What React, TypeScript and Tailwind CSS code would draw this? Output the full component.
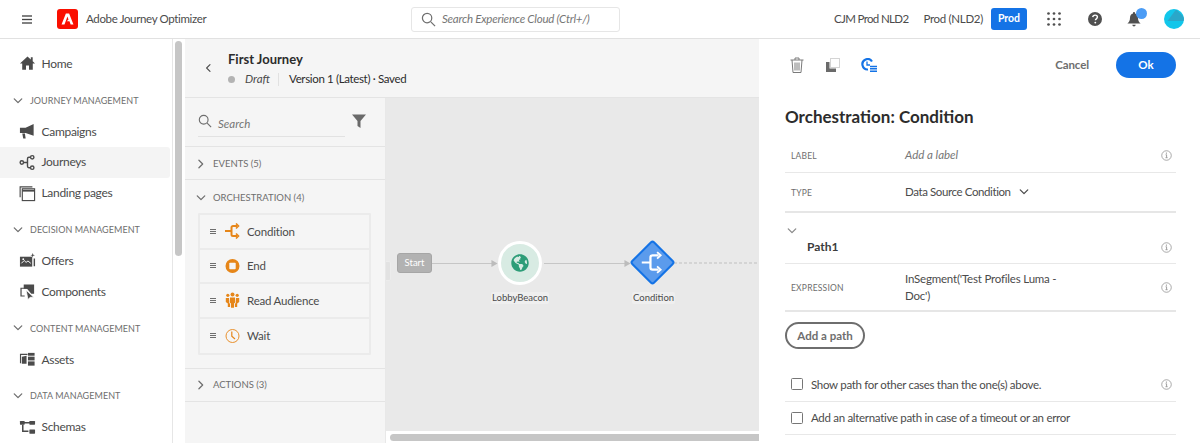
import React from "react";
import { FaGlobeAmericas } from "react-icons/fa";

const font = "font-['Lato','Noto_Sans',sans-serif]";

function Chevron({ dir = "down", className = "" }: { dir?: "down" | "right" | "left"; className?: string }) {
  const d = dir === "down" ? "M1.5 3.5 6 8l4.5-4.5" : dir === "right" ? "M3.5 1.5 8 6l-4.5 4.5" : "M8 1.5 3.5 6 8 10.5";
  return (
    <svg viewBox="0 0 12 12" className={className} fill="none" stroke="currentColor" strokeWidth="1.5" strokeLinecap="round" strokeLinejoin="round">
      <path d={d} />
    </svg>
  );
}

function Info() {
  return (
    <svg viewBox="0 0 12 12" className="w-[11px] h-[11px] text-[#8a8a8a] shrink-0" fill="none" stroke="currentColor">
      <circle cx="6" cy="6" r="5.2" strokeWidth="0.8" />
      <path d="M5 5.2h1.1v3M4.9 8.4h2.3" strokeWidth="0.9" />
      <circle cx="5.9" cy="3.4" r="0.7" fill="currentColor" stroke="none" />
    </svg>
  );
}

const navIcons: Record<string, React.ReactNode> = {
  Home: <path d="M9 1.500 1 9h2.400v6.500h4V11h3.200v4.500h4V9H17L14.500 6.600V2.500h-2v2.200z" fill="currentColor" />,
  Campaigns: (
    <g fill="currentColor">
      <path d="M15.500 1v12.500L7 10.500H1V5h6z" />
      <path d="M3.500 11h2.800l.7 5.500H4.500z" />
    </g>
  ),
  Journeys: (
    <g fill="none" stroke="currentColor" strokeWidth="1.500">
      <circle cx="3" cy="9" r="1.800" />
      <circle cx="14" cy="3.500" r="1.800" />
      <circle cx="14" cy="14.500" r="1.800" />
      <path d="M5 9h4M12 3.500h-1.500a1.500 1.500 0 0 0-1.500 1.500v8a1.500 1.500 0 0 0 1.500 1.500H12" />
    </g>
  ),
  "Landing pages": (
    <g fill="none" stroke="currentColor" strokeWidth="1.200">
      <rect x="3.500" y="4" width="13" height="12.500" />
      <path d="M3.500 6h13" strokeWidth="2" />
      <path d="M1.200 13V2h13" />
    </g>
  ),
  Offers: (
    <g>
      <rect x="1" y="5" width="13" height="10.500" fill="currentColor" />
      <path d="M2.500 12l3-3 2 2 2-1.500 3 2.500" fill="none" stroke="#fff" strokeWidth="1" />
      <circle cx="4.500" cy="7.600" r="1" fill="#fff" />
      <path d="M14.500 1l.6 1.800 1.800.6-1.800.6-.6 1.800-.6-1.800-1.800-.6 1.800-.6zM15.500 7h1.500v8h-1.500z" fill="currentColor" />
    </g>
  ),
  Components: (
    <g>
      <path d="M5 1.500h11v10H13L8.500 6H5z" fill="currentColor" />
      <path d="M1.500 5h8v1.200H2.800v7H6v1.200H1.500z" fill="currentColor" />
      <path d="M7.500 7.500l8 7.500-3.600.2L9.500 17.500z" fill="currentColor" stroke="#fff" strokeWidth="0.800" />
    </g>
  ),
  Assets: (
    <g fill="currentColor">
      <path d="M1 3h8v1.200H2.200V13H1z" />
      <path d="M3 6l5-1v8.500H3z" />
      <rect x="9.500" y="2" width="7" height="3" />
      <rect x="9.500" y="6" width="7" height="4" />
      <rect x="9.500" y="11" width="7" height="4.500" />
    </g>
  ),
  Schemas: (
    <g>
      <path d="M4 6v7h6M4 4h8" fill="none" stroke="currentColor" strokeWidth="1.600" />
      <rect x="1" y="2" width="5" height="4" rx="0.600" fill="currentColor" />
      <rect x="11" y="2" width="6" height="4" rx="0.600" fill="currentColor" />
      <rect x="11" y="11" width="6" height="4.500" rx="0.600" fill="currentColor" />
    </g>
  ),
};

function NavItem({ label, active }: { label: string; active?: boolean }) {
  return (
    <div className={`h-[30.7px] flex items-center pl-[19px] rounded-r-[3px] mr-[2px] ${active ? "bg-[#f4f4f4]" : ""}`}>
      <svg viewBox="0 0 18 18" className="w-[17px] h-[17px] text-[#4b4b4b] shrink-0">
        {navIcons[label]}
      </svg>
      <span className="ml-[5.500px] text-[12px] tracking-[-0.3px] text-[#4b4b4b]">{label}</span>
    </div>
  );
}

function NavSection({ label }: { label: string }) {
  return (
    <div className="h-[30.7px] mt-[6px] mb-[0.500px] flex items-center pl-[13px]">
      <Chevron className="w-[10px] h-[10px] text-[#6e6e6e]" />
      <span className="ml-[7px] text-[9px] tracking-[0.05px] text-[#6e6e6e] whitespace-nowrap">{label}</span>
    </div>
  );
}

function TopBar() {
  return (
    <header className="h-[39px] shrink-0 bg-white border-b border-[#e1e1e1] flex items-center text-[#4b4b4b] pr-[16px]">
      <svg viewBox="0 0 12 10" className="ml-[22px] w-[10px] h-[9px]" fill="#444">
        <rect width="12" height="1.600" />
        <rect y="4.200" width="12" height="1.600" />
        <rect y="8.400" width="12" height="1.600" />
      </svg>
      <div className="ml-[25px] w-[21px] h-[20px] rounded-[3px] bg-[#fa0f00] flex items-center justify-center">
        <svg viewBox="0 0 24 22" className="w-[13px] h-[12px]" fill="#fff">
          <path d="M9 1h6l8 20h-5.200l-2.200-5.800H10.500L14 12h-.2L12 6.500 6.400 21H1z" />
        </svg>
      </div>
      <span className="ml-[8px] w-[120px] text-[11.500px] tracking-[-0.35px] whitespace-nowrap">Adobe Journey Optimizer</span>
      <div className="ml-[205px] w-[209px] h-[25px] rounded-[3px] border border-[#e6e6e6] flex items-center pl-[9px]">
        <svg viewBox="0 0 16 16" className="w-[15px] h-[15px] text-[#6e6e6e]" fill="none" stroke="currentColor" strokeWidth="1.300">
          <circle cx="6.500" cy="6.500" r="5" />
          <path d="M10.500 10.500 15 15" />
        </svg>
        <span className="ml-[6px] text-[11.500px] tracking-[-0.23px] italic text-[#767676] whitespace-nowrap">Search Experience Cloud (Ctrl+/)</span>
      </div>
      <span className="ml-auto text-[11.500px] tracking-[-0.65px] whitespace-nowrap">CJM Prod NLD2</span>
      <span className="ml-[15px] text-[11.500px] tracking-[-0.3px] whitespace-nowrap">Prod (NLD2)</span>
      <span className="ml-[8px] w-[36px] h-[22px] rounded-[3px] bg-[#1473e6] text-white text-[10.500px] font-bold flex items-center justify-center">Prod</span>
      <svg viewBox="0 0 14 14" className="ml-[20px] w-[14px] h-[14px]" fill="#505050">
        {[1.5, 7, 12.5].flatMap((y) => [1.5, 7, 12.5].map((x) => <circle key={`${x}-${y}`} cx={x} cy={y} r="1.350" />))}
      </svg>
      <svg viewBox="0 0 14 14" className="ml-[27px] w-[14px] h-[14px]">
        <circle cx="7" cy="7" r="7" fill="#505050" />
        <path d="M4.700 5.200c.2-1.400 1.200-2.100 2.400-2.100 1.300 0 2.300.8 2.300 2 0 1.800-2 1.700-2 3.200" fill="none" stroke="#fff" strokeWidth="1.400" />
        <circle cx="7.300" cy="10.600" r="0.950" fill="#fff" />
      </svg>
      <div className="relative ml-[25px] w-[14px] h-[15px] mt-[1px]">
        <svg viewBox="0 0 14 15" className="w-[14px] h-[15px]" fill="#505050">
          <path d="M7 0c.7 0 1 .5 1 1v.6c2 .5 3 2.200 3 4.200 0 3 1 4.300 2.600 5.800H.4C2 10.100 3 8.800 3 5.800c0-2 1-3.700 3-4.200V1c0-.5.3-1 1-1zM5.300 12.800h3.400C8.500 13.800 7.900 14.500 7 14.500s-1.500-.7-1.700-1.700z" />
        </svg>
        <span className="absolute left-[8.500px] top-[-4px] w-[11px] h-[11px] rounded-full bg-[#4b9cf5]" />
      </div>
      <svg viewBox="0 0 20 20" className="ml-[23px] w-[20px] h-[20px]">
        <clipPath id="avatar-clip"><circle cx="10" cy="10" r="10" /></clipPath>
        <circle cx="10" cy="10" r="10" fill="#12c6ea" />
        <path d="M12 0.500 3.500 12H20V8z" fill="#2aa7c9" clipPath="url(#avatar-clip)" />
      </svg>
    </header>
  );
}

function Sidebar() {
  return (
    <aside className="w-[173px] shrink-0 border-r border-[#e6e6e6] pt-[9.500px] bg-white overflow-hidden">
      <NavItem label="Home" />
      <NavSection label="JOURNEY MANAGEMENT" />
      <NavItem label="Campaigns" />
      <NavItem label="Journeys" active />
      <NavItem label="Landing pages" />
      <NavSection label="DECISION MANAGEMENT" />
      <NavItem label="Offers" />
      <NavItem label="Components" />
      <NavSection label="CONTENT MANAGEMENT" />
      <NavItem label="Assets" />
      <NavSection label="DATA MANAGEMENT" />
      <NavItem label="Schemas" />
    </aside>
  );
}

function ScrollTrack() {
  return (
    <div className="w-[12px] shrink-0 bg-white pl-[2px] pt-[2px]">
      <div className="w-[7px] h-[215px] rounded-full bg-[#c6c6c6]" />
    </div>
  );
}

function Accordion({ label, open, tight }: { label: string; open?: boolean; tight?: boolean }) {
  return (
    <div className={`flex items-center pl-[11px] text-[#6e6e6e] h-[33px] ${open ? "pt-[3px]" : "border-b border-[#e4e4e4]"} ${!open && !tight ? "pt-[2px]" : ""}`}>
      <Chevron dir={open ? "down" : "right"} className="w-[10px] h-[10px]" />
      <span className="ml-[7px] text-[9.500px] whitespace-nowrap">{label}</span>
    </div>
  );
}

const activityIcons: Record<string, React.ReactNode> = {
  Condition: (
    <g fill="none" stroke="#e68619" strokeWidth="2">
      <path d="M0 8h6.500M12 3H8a1.500 1.500 0 0 0-1.500 1.500v7A1.500 1.500 0 0 0 8 13h4" />
      <path d="M11 .5 13.500 3 11 5.500M11 10.500 13.500 13 11 15.500" strokeWidth="1.600" />
    </g>
  ),
  End: (
    <g>
      <circle cx="7.500" cy="8" r="6.300" fill="#e68619" stroke="#e68619" strokeWidth="1.400" />
      <rect x="4.300" y="4.800" width="6.400" height="6.400" rx="0.800" fill="#f5f5f5" />
    </g>
  ),
  "Read Audience": (
    <g fill="#e68619">
      <circle cx="7.500" cy="2.600" r="2" />
      <circle cx="2.800" cy="3.300" r="1.600" />
      <circle cx="12.200" cy="3.300" r="1.600" />
      <path d="M5 5.500h5l.3 5-1.300 1v4.300H6v-4.300l-1.300-1z" />
      <path d="M.8 6H4l.1 5 1 .8V15H2.800v-3.500L.8 10zM14.200 6H11l-.1 5-1 .8V15h2.300v-3.500l2-1.500z" />
    </g>
  ),
  Wait: (
    <g fill="none" stroke="#e68619" strokeWidth="0.900">
      <circle cx="7.500" cy="8" r="6.500" />
      <path d="M6.800 3.500V8.300L10 11" strokeWidth="1.200" />
    </g>
  ),
};

function Activity({ label, last }: { label: string; last?: boolean }) {
  return (
    <div className={`h-[34.500px] flex items-center ${last ? "" : "border-b-2 border-[#ebebeb]"}`}>
      <svg viewBox="0 0 6 5" className="ml-[10px] w-[6px] h-[5px]" fill="#6e6e6e">
        <rect width="6" height="1" />
        <rect y="2" width="6" height="1" />
        <rect y="4" width="6" height="1" />
      </svg>
      <svg viewBox="0 0 15 16" className="ml-[9px] w-[15px] h-[16px]">
        {activityIcons[label]}
      </svg>
      <span className="ml-[7px] text-[11.500px] tracking-[-0.2px] text-[#4b4b4b] whitespace-nowrap">{label}</span>
    </div>
  );
}

function Palette() {
  return (
    <div className="w-[201px] shrink-0 bg-[#f5f5f5] border-r border-[#e8e8e8] flex flex-col">
      <div className="h-[49px] border-b border-[#e4e4e4] shrink-0 px-[13px]">
        <div className="flex items-center justify-between pt-[15px]">
          <div className="w-[147px] h-[24px] border-b border-[#e2e2e2] flex items-start">
            <svg viewBox="0 0 16 16" className="w-[14px] h-[14px] text-[#6e6e6e] mt-[1px]" fill="none" stroke="currentColor" strokeWidth="1.300">
              <circle cx="6.500" cy="6.500" r="5" />
              <path d="M10.500 10.500 15 15" />
            </svg>
            <span className="ml-[6px] mt-[2px] text-[11.500px] italic text-[#767676]">Search</span>
          </div>
          <svg viewBox="0 0 14 14" className="w-[14px] h-[14px] mr-[6px] mb-[8px]" fill="#6a6a6a">
            <path d="M0 .5h14L8.500 7v7l-3-2V7z" />
          </svg>
        </div>
      </div>
      <Accordion label="EVENTS (5)" />
      <Accordion label="ORCHESTRATION (4)" open />
      <div className="mx-[13px] w-[173px] border-2 border-[#ebebeb] rounded-[1px] shrink-0">
        <Activity label="Condition" />
        <Activity label="End" />
        <Activity label="Read Audience" />
        <Activity label="Wait" last />
      </div>
      <div className="mt-[13px] border-t border-[#e4e4e4]" />
      <Accordion label="ACTIONS (3)" tight />
    </div>
  );
}

function JourneyCanvas() {
  return (
    <div className="flex-1 flex flex-col min-w-0">
      <div className="relative flex-1 bg-[#e9e9e9] overflow-hidden">
        {/* splitter */}
        <div className="absolute left-[-3px] top-[163px] w-[8px] h-[20px] rounded-[2px] bg-[#e2e2e2] border border-[#ececec]" />
        {/* connectors */}
        <div className="absolute left-[46px] top-[164.500px] w-[62px] h-[1.500px] bg-[#c6c6c6]" />
        <svg viewBox="0 0 7 8" className="absolute left-[105px] top-[161.500px] w-[7px] h-[7px]" fill="#bcbcbc"><path d="M0 0l7 4-7 4z" /></svg>
        <div className="absolute left-[158px] top-[164.500px] w-[85px] h-[1.500px] bg-[#c6c6c6]" />
        <svg viewBox="0 0 7 8" className="absolute left-[238px] top-[161.500px] w-[7px] h-[7px]" fill="#bcbcbc"><path d="M0 0l7 4-7 4z" /></svg>
        <svg className="absolute left-[288px] top-[164px] w-[90px] h-[2px]">
          <line x1="0" y1="1" x2="90" y2="1" stroke="#cdcdcd" strokeWidth="1.500" strokeDasharray="3 2" />
        </svg>
        {/* Start */}
        <div className="absolute left-[11px] top-[155px] w-[35px] h-[20px] rounded-[3px] bg-[#b2b2b2] border border-[#a6a6a6] text-white text-[9.500px] flex items-center justify-center">Start</div>
        {/* LobbyBeacon */}
        <div className="absolute left-[112px] top-[143px] w-[44px] h-[44px] rounded-full bg-[#d8ebe3] border-[3px] border-white flex items-center justify-center">
          <FaGlobeAmericas className="w-[18px] h-[18px] text-[#2d9d78]" />
        </div>
        <span className="absolute left-[105px] top-[194px] px-[1px] rounded-[2px] bg-[#efefef] text-[9.500px] leading-[12px] text-[#4b4b4b]">LobbyBeacon</span>
        {/* Condition */}
        <svg viewBox="0 0 46 46" className="absolute left-[243px] top-[141px] w-[47px] h-[47px]">
          <rect x="8" y="8" width="30" height="30" rx="2" transform="rotate(45 23 23)" fill="#5b9bec" stroke="#1473e6" strokeWidth="2" />
          <path d="M12.500 23H20M29 16h-6a2 2 0 0 0-2 2v10a2 2 0 0 0 2 2h6" fill="none" stroke="#fff" strokeWidth="2.200" />
          <path d="M27.500 12.800 31 16l-3.500 3.200M27.500 26.800 31 30l-3.500 3.200" fill="none" stroke="#fff" strokeWidth="1.800" />
        </svg>
        <span className="absolute left-[246px] top-[194px] px-[1px] rounded-[2px] bg-[#efefef] text-[9.500px] leading-[12px] text-[#4b4b4b]">Condition</span>
      </div>
      <div className="h-[12px] shrink-0 bg-white pl-[4px] pt-[3px]">
        <div className="h-[7px] rounded-l-full bg-[#c6c6c6]" />
      </div>
    </div>
  );
}

function Row({ children, className = "" }: { children: React.ReactNode; className?: string }) {
  return <div className={`flex items-center border-b border-[#e8e8e8] ${className}`}>{children}</div>;
}

function Field({ label }: { label: string }) {
  return <span className="w-[120px] pl-[6px] mt-[3px] shrink-0 text-[8.500px] tracking-[0.2px] text-[#6e6e6e]">{label}</span>;
}

function Checkbox({ label, info }: { label: string; info?: boolean }) {
  return (
    <Row className="h-[33.500px] pl-[6px]">
      <span className="w-[12px] h-[12px] rounded-[1.500px] border-[1.500px] border-[#767676] bg-white shrink-0" />
      <span className="ml-[8px] flex-1 text-[11.500px] tracking-[-0.3px] text-[#4b4b4b] whitespace-nowrap">{label}</span>
      {info && <span className="mr-[4px]"><Info /></span>}
    </Row>
  );
}

function RightPanel() {
  return (
    <section className="w-[441px] shrink-0 bg-white pl-[26px] pr-[24px] overflow-hidden">
      <div className="h-[52px] flex items-center relative">
        <svg viewBox="0 0 14 16" className="ml-[5px] w-[14px] h-[16px]" fill="none" stroke="#7a7a7a" strokeWidth="1">
          <path d="M.5 3h13M5 3V1h4v2M2 3l1 12.500h8L12 3M5 5.500v8M7 5.500v8M9 5.500v8" />
        </svg>
        <svg viewBox="0 0 14 14" className="ml-[22px] w-[14px] h-[14px]">
          <path d="M0 4h3.500v6.500H10V14H0z" fill="#6a6a6a" />
          <rect x="4.500" y="0.500" width="9" height="9" fill="#fff" stroke="#a8a8a8" strokeDasharray="1 1" />
        </svg>
        <svg viewBox="0 0 16 14" className="ml-[21px] w-[16px] h-[14px]" fill="none" stroke="#1473e6">
          <path d="M11 3.500A5.200 5.200 0 1 0 7 11.500" strokeWidth="2.200" />
          <path d="M6 3.500V7h3" strokeWidth="1.300" />
          <path d="M9 8.500h7M9 10.800h7M9 13.200h7" strokeWidth="1.400" />
        </svg>
        <span className="ml-auto text-[11.500px] font-bold tracking-[-0.1px] text-[#6e6e6e]">Cancel</span>
        <span className="ml-[27px] w-[60px] h-[26px] rounded-full bg-[#1473e6] text-white text-[11.500px] font-bold flex items-center justify-center">Ok</span>
      </div>
      <h1 className="mt-[13px] text-[17px] leading-[26px] font-bold text-[#2c2c2c] whitespace-nowrap">Orchestration: Condition</h1>
      <Row className="h-[35px] mt-[8px]">
        <Field label="LABEL" />
        <span className="flex-1 text-[11.500px] italic text-[#767676]">Add a label</span>
        <span className="mr-[4px]"><Info /></span>
      </Row>
      <div className="h-[40px] flex items-center border-b-2 border-[#e6e6e6]">
        <Field label="TYPE" />
        <span className="text-[11.500px] tracking-[-0.4px] text-[#4b4b4b] whitespace-nowrap">Data Source Condition</span>
        <Chevron className="ml-[8px] w-[10px] h-[10px] text-[#4b4b4b]" />
      </div>
      <div className="h-[51px] border-b border-[#e8e8e8] pt-[13px]">
        <Chevron className="ml-[2px] w-[10px] h-[10px] text-[#8a8a8a]" />
        <div className="flex items-center justify-between mt-[1px] h-[20px]">
          <span className="ml-[22px] text-[12px] font-bold text-[#3c3c3c]">Path1</span>
          <span className="mr-[4px]"><Info /></span>
        </div>
      </div>
      <div className="h-[48px] flex items-center border-b-2 border-[#e6e6e6]">
        <Field label="EXPRESSION" />
        <span className="flex-1 text-[11.500px] tracking-[-0.2px] leading-[17px] text-[#4b4b4b]">InSegment('Test Profiles Luma -<br />Doc')</span>
        <span className="mr-[4px]"><Info /></span>
      </div>
      <div className="mt-[10px] w-[80px] h-[27px] rounded-full border-2 border-[#6e6e6e] flex items-center justify-center text-[11.500px] font-bold text-[#6e6e6e] whitespace-nowrap">Add a path</div>
      <div className="mt-[19px]">
        <Checkbox label="Show path for other cases than the one(s) above." info />
        <Checkbox label="Add an alternative path in case of a timeout or an error" />
      </div>
    </section>
  );
}

export default function App() {
  return (
    <div className={`${font} w-[1200px] h-[443px] flex flex-col overflow-hidden bg-white`}>
      <TopBar />
      <div className="flex-1 flex min-h-0">
        <Sidebar />
        <ScrollTrack />
        <main className="flex-1 min-w-0 flex flex-col">
          <div className="h-[59px] shrink-0 bg-[#f5f5f5] border-b border-[#e4e4e4] flex items-center pl-[19px]">
            <Chevron dir="left" className="w-[9px] h-[10px] text-[#4b4b4b] mt-[-1px]" />
            <div className="ml-[15px] mt-[1px]">
              <div className="text-[13px] font-bold text-[#2c2c2c] leading-[18px]">First Journey</div>
              <div className="mt-[3.500px] flex items-center text-[11.500px] leading-[16px] text-[#2c2c2c]">
                <span className="w-[7px] h-[7px] rounded-full bg-[#b3b3b3]" />
                <span className="ml-[10px] italic text-[#4b4b4b]">Draft</span>
                <span className="ml-[8px] w-px h-[13px] bg-[#e1e1e1]" />
                <span className="ml-[10px] tracking-[-0.35px] whitespace-nowrap">Version 1 (Latest) · Saved</span>
              </div>
            </div>
          </div>
          <div className="flex-1 flex min-h-0">
            <Palette />
            <JourneyCanvas />
          </div>
        </main>
        <RightPanel />
      </div>
    </div>
  );
}
